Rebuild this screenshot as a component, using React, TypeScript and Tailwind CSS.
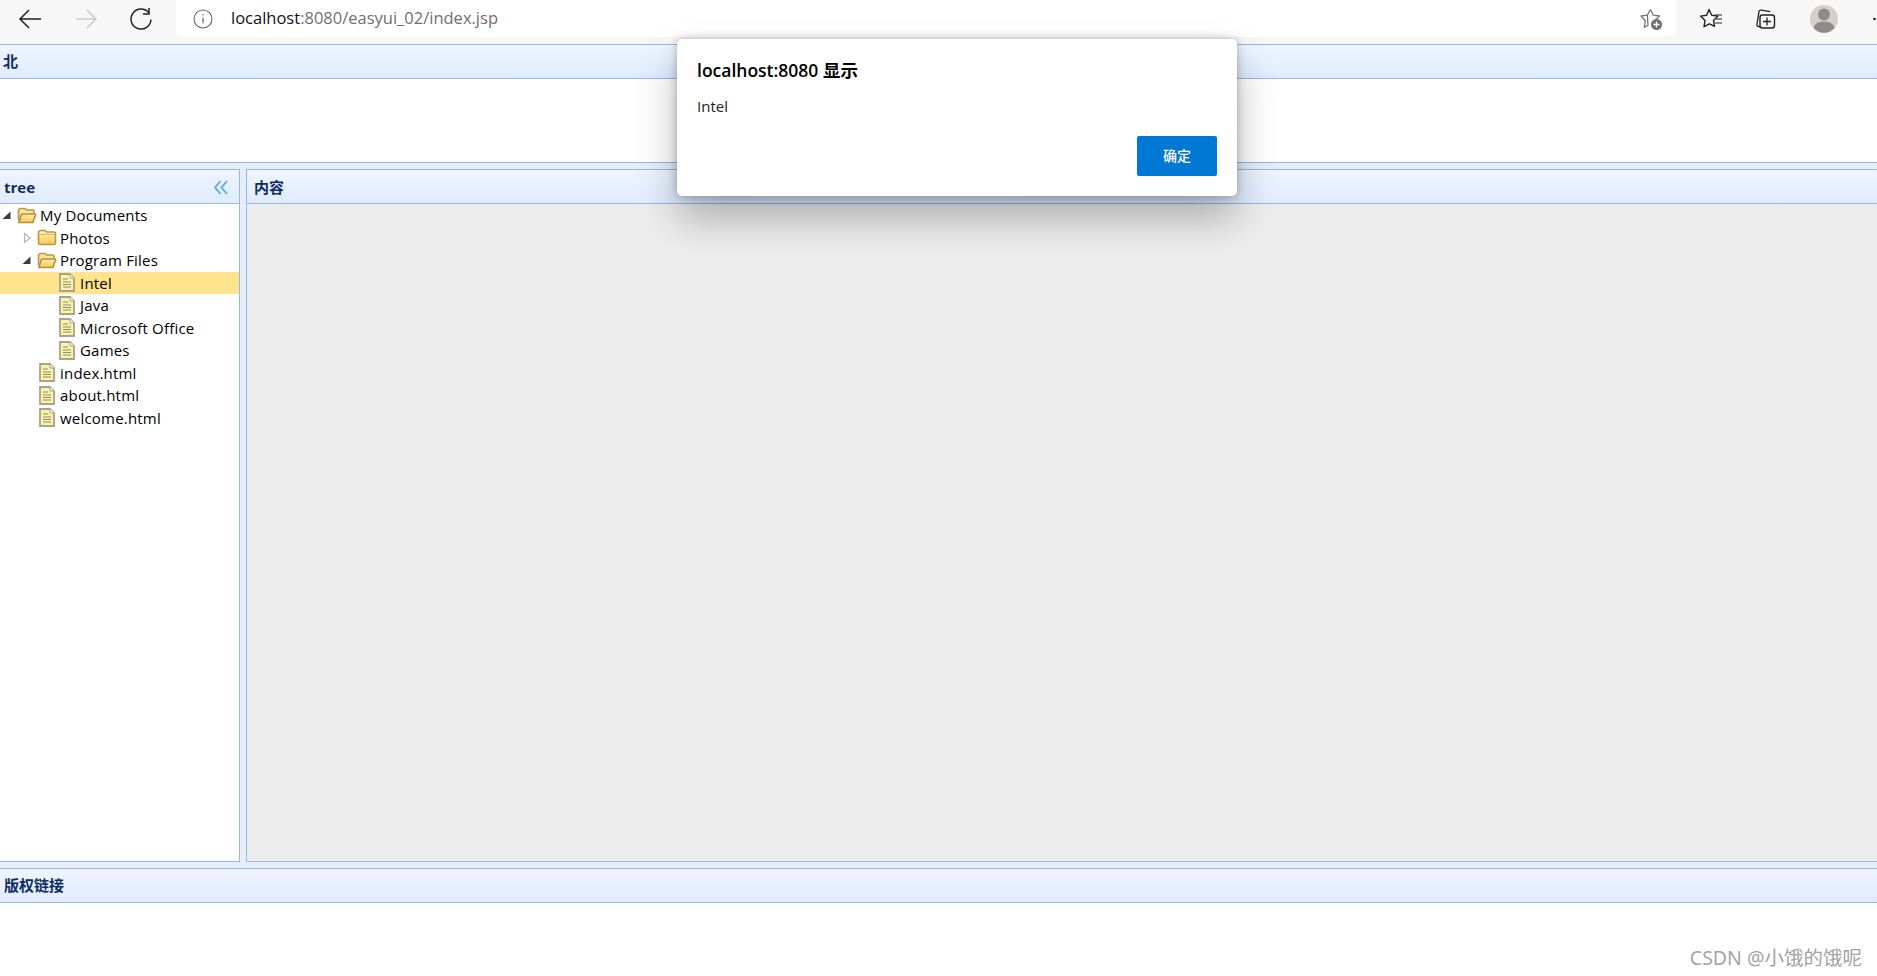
import React from "react";

const ui = "font-['Open_Sans','Noto_Sans','Noto_Sans_CJK_SC',sans-serif]";

function FolderOpen() {
  return (
    <svg width="20" height="17" viewBox="0 0 20 17" className="shrink-0">
      <defs>
        <linearGradient id="fo" x1="0" y1="0" x2="0" y2="1">
          <stop offset="0" stopColor="#fff2b0" />
          <stop offset="1" stopColor="#f2c650" />
        </linearGradient>
      </defs>
      <path d="M1.500 13V3L3 1.500h5L9.500 3H16l1 1v3" fill="#fbe596" stroke="#b99547" strokeWidth="1.600" />
      <path d="M1.800 15.500h14l2.800-7.500c.2-.5-.1-1-.7-1H5.500c-.6 0-1 .3-1.200.8L1.800 15.500z" fill="url(#fo)" stroke="#b48d40" strokeWidth="1.600" strokeLinejoin="round" />
    </svg>
  );
}

function FolderClosed() {
  return (
    <svg width="20" height="17" viewBox="0 0 20 17" className="shrink-0">
      <defs>
        <linearGradient id="fc" x1="0" y1="0" x2="0" y2="1">
          <stop offset="0" stopColor="#fff4b8" />
          <stop offset="1" stopColor="#f3c955" />
        </linearGradient>
      </defs>
      <path d="M1.500 14.500V3L3 1.500h5L9.500 3h8l1 1v10.500l-1 1H2.500z" fill="url(#fc)" stroke="#b99547" strokeWidth="1.600" strokeLinejoin="round" />
      <path d="M2 5.500h16" stroke="#e0b95e" strokeWidth="1" />
    </svg>
  );
}

function FileIcon() {
  return (
    <svg width="16" height="19" viewBox="0 0 16 19" className="shrink-0">
      <path d="M1 1h10l4 4v13H1z" fill="#fdf3a4" stroke="#a6a28e" strokeWidth="1.800" />
      <path d="M11 1v4h4" fill="#fff" stroke="#a6a28e" strokeWidth="1" />
      <path d="M4 6h5M4 9h8M4 11.500h8M4 14h8" stroke="#8c8a78" strokeWidth="1.200" />
    </svg>
  );
}

function Hit({ open }: { open: boolean }) {
  return (
    <span className="w-5 h-full flex items-center justify-center shrink-0 -ml-[3px] mr-[3px]">
      {open ? (
        <svg width="12" height="12" viewBox="0 0 12 12">
          <path d="M9.500 2.500v7.500H1.500z" fill="#3c3c3c" />
        </svg>
      ) : (
        <svg width="12" height="12" viewBox="0 0 12 12">
          <path d="M3.500 1.500l5.500 4.500-5.500 4.500z" fill="#fff" stroke="#b4b4b4" strokeWidth="1.200" />
        </svg>
      )}
    </span>
  );
}

type Row = { label: string; depth: number; kind: "open" | "closed" | "file"; selected?: boolean };

const rows: Row[] = [
  { label: "My Documents", depth: 0, kind: "open" },
  { label: "Photos", depth: 1, kind: "closed" },
  { label: "Program Files", depth: 1, kind: "open" },
  { label: "Intel", depth: 2, kind: "file", selected: true },
  { label: "Java", depth: 2, kind: "file" },
  { label: "Microsoft Office", depth: 2, kind: "file" },
  { label: "Games", depth: 2, kind: "file" },
  { label: "index.html", depth: 1, kind: "file" },
  { label: "about.html", depth: 1, kind: "file" },
  { label: "welcome.html", depth: 1, kind: "file" },
];

function TreeRow({ row }: { row: Row }) {
  return (
    <div className={`h-[22.5px] flex items-center ${row.selected ? "bg-[#ffe48d]" : ""}`}>
      {Array.from({ length: row.depth }).map((_, i) => (
        <span key={i} className="w-5 shrink-0" />
      ))}
      {row.kind === "file" ? <span className="w-5 shrink-0" /> : <Hit open={row.kind === "open"} />}
      <span className={`w-5 flex justify-start shrink-0 ${row.kind === "file" ? "-ml-[1px] mr-[1px]" : "-ml-[3px] mr-[3px]"}`}>
        {row.kind === "open" ? <FolderOpen /> : row.kind === "closed" ? <FolderClosed /> : <FileIcon />}
      </span>
      <span className="text-[15px] leading-none tracking-[0.2px] pt-[1px] text-[#000] whitespace-nowrap">{row.label}</span>
    </div>
  );
}

function Header({ children, className = "" }: { children: React.ReactNode; className?: string }) {
  return (
    <div className={`h-[34px] shrink-0 flex items-center bg-gradient-to-b from-[#eff5ff] to-[#e0ecff] border-b border-[#95b8e7] text-[15px] font-bold text-[#0e2d5f] ${className}`}>
      {children}
    </div>
  );
}

export default function App() {
  return (
    <div className={`relative w-[1877px] h-[976px] overflow-hidden bg-white flex flex-col ${ui}`}>
      {/* browser toolbar */}
      <div className="h-[44px] shrink-0 bg-[#f7f7f7] flex items-start">
        <div className="w-[176px] h-[37px] shrink-0 flex items-center">
          <svg width="176" height="37" viewBox="0 0 176 37" fill="none">
            <path d="M41 19H20M29 10l-9 9 9 9" stroke="#222" strokeWidth="1.500" />
            <path d="M76 19h20M87 10l9 9-9 9" stroke="#c9c9c9" strokeWidth="1.500" />
            <path d="M149 13a10 10 0 1 0 2 6.500" stroke="#222" strokeWidth="1.500" />
            <path d="M149 8v6h-6" stroke="#222" strokeWidth="1.500" />
          </svg>
        </div>
        <div className="w-[1500px] h-[37px] bg-white rounded-b-lg flex items-center shrink-0">
          <svg width="20" height="20" viewBox="0 0 20 20" fill="none" className="ml-[17px]">
            <circle cx="10" cy="10" r="9" stroke="#666" strokeWidth="1.100" />
            <path d="M10 8.500v6" stroke="#666" strokeWidth="1.200" />
            <circle cx="10" cy="5.800" r="0.800" fill="#666" />
          </svg>
          <span className="ml-[18px] text-[16.500px] text-[#6f6f6f] whitespace-nowrap">
            <span className="text-[#111]">localhost</span>:8080/easyui_02/index.jsp
          </span>
          <svg width="24" height="24" viewBox="0 0 24 24" fill="none" className="ml-auto mr-[12px] mt-[1px]">
            <path d="M10.500 2.500l2.600 5.600 6.400.9-4.600 4.400M8 18.200l-3.700 2.200 1-6.700L1 9l6.300-.9z" stroke="#777" strokeWidth="1.300" strokeLinejoin="round" />
            <path d="M10.500 2.500L7.300 8.100" stroke="#777" strokeWidth="1.300" />
            <circle cx="16.500" cy="17.500" r="5.500" fill="#6f6f6f" />
            <path d="M16.500 14.500v6M13.500 17.500h6" stroke="#fff" strokeWidth="1.400" />
          </svg>
        </div>
        <div className="h-[37px] flex-1 relative">
          <svg width="201" height="37" viewBox="0 0 201 37" fill="none">
            <g transform="translate(10 0)">
              <path d="M23 9.500l2.800 5.800 6.200.8-4.500 4.300 1 6-.5-.2-4.500-2.400-5.500 2.900 1-6.200-4.500-4.400 6.200-.8z" stroke="#222" strokeWidth="1.400" strokeLinejoin="round" />
              <path d="M29 15h7M30 19h6M29 23h7" stroke="#222" strokeWidth="1.200" />
            </g>
            <g transform="translate(12 0)">
              <path d="M73 27l-2.500-.5a2 2 0 0 1-1.500-2.300l2-12.500a2 2 0 0 1 2.300-1.500l9 1.500" stroke="#222" strokeWidth="1.300" />
              <rect x="72" y="15" width="14.500" height="13" rx="2.500" stroke="#222" strokeWidth="1.400" fill="#f7f7f7" />
              <path d="M79 17.500v8M75 21.500h8" stroke="#222" strokeWidth="1.300" />
            </g>
            <g transform="translate(14 0)">
              <circle cx="134" cy="19" r="14" fill="#d2d0ce" />
              <circle cx="134" cy="14.500" r="6" fill="#8e8c8a" />
              <path d="M123.500 28c1-4.500 5-6.500 10.500-6.500s9.500 2 10.500 6.500a14 14 0 0 1-21 0z" fill="#8e8c8a" />
              <circle cx="184.500" cy="19" r="1.300" fill="#222" />
            </g>
          </svg>
        </div>
      </div>

      {/* north */}
      <div className="shrink-0 border-t border-[#95b8e7] border-b h-[119px] flex flex-col">
        <Header className="pl-[3px]">北</Header>
        <div className="flex-1 bg-white" />
      </div>

      {/* middle */}
      <div className="h-[705px] shrink-0 bg-[#e6eef8] py-[6px] flex gap-[6px]">
        <div className="w-[240px] shrink-0 bg-white border border-l-0 border-[#95b8e7] flex flex-col">
          <Header className="pl-[4px] justify-between pr-[11px] pt-[1px]">
            <span>tree</span>
            <svg width="14" height="15" viewBox="0 0 14 15" fill="none">
              <path d="M6.500 1L1 7.500 6.500 14M13 1L7.500 7.500 13 14" stroke="#5fa5e8" strokeWidth="1.800" />
            </svg>
          </Header>
          <div>
            {rows.map((r) => (
              <TreeRow key={r.label} row={r} />
            ))}
          </div>
        </div>
        <div className="flex-1 bg-[#ededed] border-y border-l border-[#95b8e7] flex flex-col">
          <Header className="pl-[7px] pt-[1px]">内容</Header>
        </div>
      </div>

      {/* south */}
      <div className="shrink-0 border-t border-[#95b8e7]">
        <Header className="pl-[4px]">版权链接</Header>
      </div>

      {/* watermark */}
      <div className="absolute right-[15px] top-[946px] text-[19.500px] leading-6 text-[#a3a3a3] whitespace-nowrap font-['Noto_Sans','Noto_Sans_CJK_SC',sans-serif]">
        CSDN @小饿的饿呢
      </div>

      {/* alert dialog */}
      <div className="absolute left-[677px] top-[39px] w-[560px] h-[157px] bg-white rounded-[5px] shadow-[0_22px_40px_rgba(0,0,0,0.28),0_0_8px_rgba(0,0,0,0.25)] px-[20px] pt-[19px]">
        <div className="text-[17.500px] font-semibold leading-[24px] text-black">localhost:8080 显示</div>
        <div className="mt-[14px] text-[15px] leading-[20px] text-[#222]">Intel</div>
        <button className="absolute right-[20px] bottom-[20px] w-[80px] h-[40px] pb-[2px] bg-[#0078d4] rounded-[2px] text-white text-[14px] font-medium">确定</button>
      </div>
    </div>
  );
}
